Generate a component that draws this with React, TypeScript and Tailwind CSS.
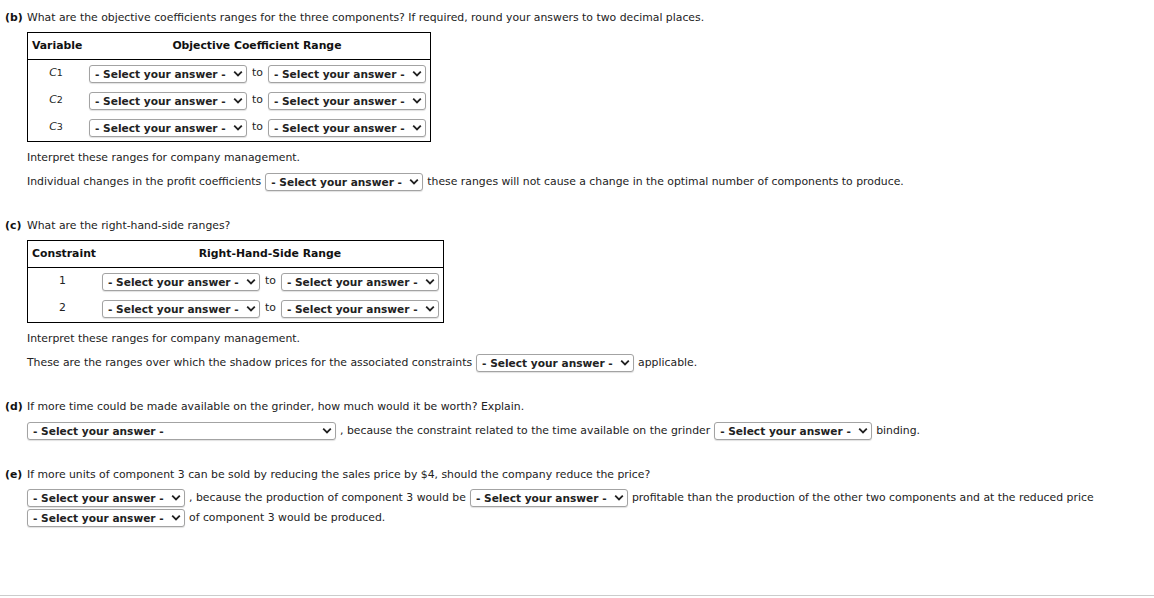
import React from "react";

function Chevron() {
    return (
        <svg width="10" height="7" viewBox="0 0 10 7" className="pointer-events-none absolute right-[4px] top-1/2 -translate-y-1/2">
            <path d="M1.2 1.2 L5 5 L8.8 1.2" fill="none" stroke="#222" strokeWidth="1.8" />
        </svg>
    );
}

function AnswerSelect({ width = "w-[158px]" }: { width?: string }) {
    return (
        <span className={`relative inline-block h-[18px] shrink-0 ${width}`}>
            <select
                defaultValue=""
                className="h-full w-full appearance-none rounded-[3px] border border-[#a3a3a3] bg-white pl-[5px] pr-[16px] text-[10.6px] leading-[16px] font-bold text-[#222] shadow-[0_1px_1px_rgba(0,0,0,0.12)] outline-none"
            >
                <option value="">- Select your answer -</option>
            </select>
            <Chevron />
        </span>
    );
}

function QuestionTitle({ label, children }: { label: string; children: React.ReactNode }) {
    return (
        <div className="flex h-[24px] items-center">
            <span className="w-[22px] font-bold text-[#111]">{label}</span>
            <span>{children}</span>
        </div>
    );
}

function TextLine({ children }: { children: React.ReactNode }) {
    return <div className="flex h-[24px] items-center gap-[4px] whitespace-nowrap">{children}</div>;
}

function Sub({ n }: { n: number }) {
    return (
        <span>
            <i>C</i>
            <span className="text-[9.5px]">{n}</span>
        </span>
    );
}

interface RangeTableProps {
    firstHeader: string;
    secondHeader: string;
    firstWidth: string;
    rows: React.ReactNode[];
}

function RangeTable({ firstHeader, secondHeader, firstWidth, rows }: RangeTableProps) {
    return (
        <div className="mt-[2px] inline-flex flex-col border border-black">
            <div className="flex h-[27px] items-center border-b border-black font-bold text-[#111]">
                <div className={`pl-[4px] ${firstWidth}`}>{firstHeader}</div>
                <div className="flex-1 text-center">{secondHeader}</div>
            </div>
            {rows.map((label, i) => (
                <div key={i} className="flex h-[27px] items-center pr-[4px]">
                    <div className={`text-center ${firstWidth}`}>{label}</div>
                    <div className="ml-[5px] flex items-center">
                        <AnswerSelect />
                        <span className="mx-[5px]">to</span>
                        <AnswerSelect />
                    </div>
                </div>
            ))}
        </div>
    );
}

export default function App() {
    return (
        <div
            className="relative h-[598px] w-full overflow-hidden bg-white pl-[5px] pt-[6px] text-[10.85px] text-[#222]"
            style={{ fontFamily: '"DejaVu Sans", Verdana, sans-serif' }}
        >
            <QuestionTitle label="(b)">
                What are the objective coefficients ranges for the three components? If required, round your answers to two decimal places.
            </QuestionTitle>
            <div className="pl-[22px]">
                <RangeTable
                    firstHeader="Variable"
                    secondHeader="Objective Coefficient Range"
                    firstWidth="w-[56px]"
                    rows={[<Sub n={1} />, <Sub n={2} />, <Sub n={3} />]}
                />
                <div className="mt-[4px]">
                    <TextLine>Interpret these ranges for company management.</TextLine>
                    <TextLine>
                        <span>Individual changes in the profit coefficients</span>
                        <AnswerSelect />
                        <span>these ranges will not cause a change in the optimal number of components to produce.</span>
                    </TextLine>
                </div>
            </div>

            <div className="mt-[20px]">
                <QuestionTitle label="(c)">What are the right-hand-side ranges?</QuestionTitle>
            </div>
            <div className="pl-[22px]">
                <RangeTable
                    firstHeader="Constraint"
                    secondHeader="Right-Hand-Side Range"
                    firstWidth="w-[69px]"
                    rows={["1", "2"]}
                />
                <div className="mt-[4px]">
                    <TextLine>Interpret these ranges for company management.</TextLine>
                    <TextLine>
                        <span>These are the ranges over which the shadow prices for the associated constraints</span>
                        <AnswerSelect />
                        <span>applicable.</span>
                    </TextLine>
                </div>
            </div>

            <div className="mt-[20px]">
                <QuestionTitle label="(d)">
                    If more time could be made available on the grinder, how much would it be worth? Explain.
                </QuestionTitle>
            </div>
            <div className="pl-[22px]">
                <TextLine>
                    <AnswerSelect width="w-[309px]" />
                    <span>, because the constraint related to the time available on the grinder</span>
                    <AnswerSelect />
                    <span>binding.</span>
                </TextLine>
            </div>

            <div className="mt-[20px]">
                <QuestionTitle label="(e)">
                    If more units of component 3 can be sold by reducing the sales price by $4, should the company reduce the price?
                </QuestionTitle>
            </div>
            <div className="pl-[22px]">
                <div className="mt-[1px] flex h-[20px] items-center gap-[4px] whitespace-nowrap">
                    <AnswerSelect />
                    <span>, because the production of component 3 would be</span>
                    <AnswerSelect />
                    <span>profitable than the production of the other two components and at the reduced price</span>
                </div>
                <div className="flex h-[20px] items-center gap-[4px] whitespace-nowrap">
                    <AnswerSelect />
                    <span>of component 3 would be produced.</span>
                </div>
            </div>

            <div className="absolute bottom-[2px] left-0 right-0 border-b border-[#cccccc]" />
        </div>
    );
}
